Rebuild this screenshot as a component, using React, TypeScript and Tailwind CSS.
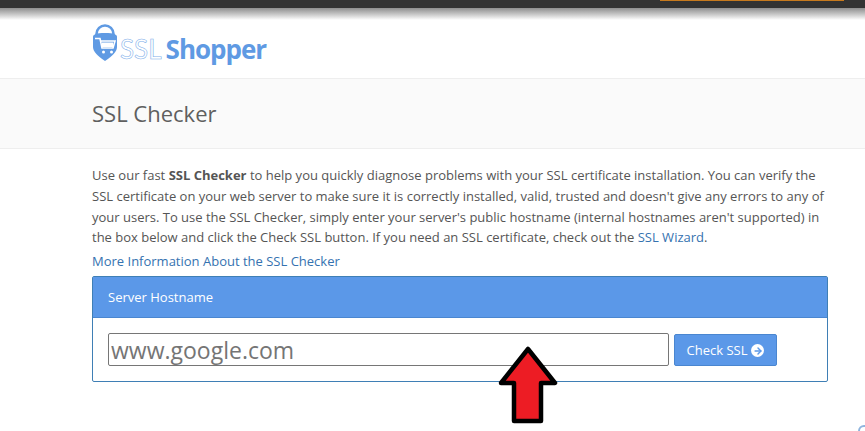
import React from 'react';
import { ArrowRight } from 'lucide-react';

const LogoIcon = () => (
  <svg width="26" height="38" viewBox="0 0 26 38" fill="none">
    <path d="M4.5 13 V10 C4.5 5 8.5 1.5 13 1.5 C17.5 1.5 21.5 5 21.5 10 V13" stroke="#5f9ae3" strokeWidth="2.6" />
    <path d="M1 13 C1 10.5 4 9 13 9 C22 9 25 10.5 25 13 L25 23 C25 28 20 32 13 37 C6 32 1 28 1 23 Z" fill="#5f9ae3" />
    <path d="M3 14.5 H8 L10 24 H21 L23 17 H9" stroke="#fff" strokeWidth="1.6" fill="none" />
    <rect x="10" y="18.5" width="11" height="4.5" fill="#fff" />
    <circle cx="11.5" cy="28" r="1.5" fill="#fff" />
    <circle cx="19.5" cy="28" r="1.5" fill="#fff" />
  </svg>
);

const UpArrow = () => (
  <svg width="66" height="82" viewBox="0 0 66 82">
    <path d="M32 5 L59 39 L45 39 L45 77 L18 77 L18 39 L5 39 Z" fill="#ed1c24" stroke="#000" strokeWidth="4.5" strokeLinejoin="round" />
  </svg>
);

export default function App() {
  return (
    <div className="relative w-[865px] h-[431px] overflow-hidden bg-white font-['Open_Sans',sans-serif] text-[#555]">
      <div className="relative h-2 bg-[#333] shrink-0">
        <div className="absolute left-[660px] top-0 w-[184px] h-px bg-[#c77a1e]" />
      </div>
      <div className="h-3 bg-gradient-to-b from-[#8e8e8e] to-white" />

      <header className="h-[59px] border-b border-[#eee] pl-[92px] pt-1">
        <div className="flex items-start">
          <LogoIcon />
          <div className="flex items-baseline mt-[9px] ml-[2px] leading-[32px]">
            <span className="text-[26px] tracking-[0px] font-['Lato',sans-serif] text-transparent [-webkit-text-stroke:0.6px_#7fb0ea]">SSL</span>
            <span className="text-[26px] tracking-[-1px] font-bold text-[#5f9ae3] ml-[4px]">Shopper</span>
          </div>
        </div>
      </header>

      <div className="h-[70px] bg-[#fafafa] border-b border-[#eee] pl-[92px] flex items-center">
        <h1 className="text-[22px] text-[#5f5f5f]">SSL Checker</h1>
      </div>

      <main className="pl-[92px] w-[828px] pt-[16px]">
        <p className="text-[13px] leading-[20.8px] text-[#555] w-[736px]">
          Use our fast <b>SSL Checker</b> to help you quickly diagnose problems with your SSL certificate installation. You can verify the SSL certificate on your web server to make sure it is correctly installed, valid, trusted and doesn't give any errors to any of your users. To use the SSL Checker, simply enter your server's public hostname (internal hostnames aren't supported) in the box below and click the Check SSL button. If you need an SSL certificate, check out the <span className="text-[#3572b0]">SSL Wizard</span>.
        </p>
        <div className="mt-[2px] text-[13px] leading-[22px] text-[#3572b0]">More Information About the SSL Checker</div>

        <section className="mt-[4px] w-[736px] h-[106px] border border-[#3f7fb5] rounded-[2px]">
          <div className="h-[41px] bg-[#5b98e8] border-b border-[#4a86d0] flex items-center pl-[15px] pt-[1px] text-[13px] text-white">
            Server Hostname
          </div>
          <div className="flex items-start pl-[15px] pt-[15px]">
            <input
              readOnly
              placeholder="www.google.com"
              className="w-[561px] h-[33px] border border-[#767676] rounded-[2px] px-[2px] pt-[2px] text-[23px] bg-white placeholder:text-[#757575] outline-none"
            />
            <button className="ml-[5px] mt-px w-[103px] h-[32px] pt-[1px] bg-[#5b98e8] border border-[#4a86d0] rounded-[2px] text-white text-[13px] flex items-center justify-center gap-1">
              Check SSL
              <span className="w-[13px] h-[13px] rounded-full bg-white flex items-center justify-center">
                <ArrowRight size={10} strokeWidth={3.5} color="#5b98e8" />
              </span>
            </button>
          </div>
        </section>
      </main>

      <div className="absolute left-[496px] top-[344px]">
        <UpArrow />
      </div>
      <div className="absolute left-[858px] top-[425px] w-[12px] h-[12px] rounded-full border-2 border-[#8fb4de]" />
    </div>
  );
}
